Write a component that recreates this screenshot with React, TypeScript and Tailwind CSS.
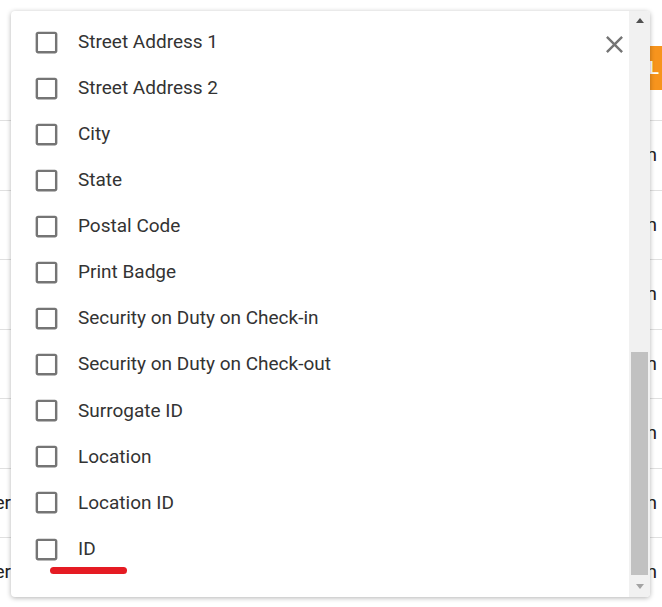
import React from 'react'

const columns = [
  'Street Address 1',
  'Street Address 2',
  'City',
  'State',
  'Postal Code',
  'Print Badge',
  'Security on Duty on Check-in',
  'Security on Duty on Check-out',
  'Surrogate ID',
  'Location',
  'Location ID',
  'ID',
]

const rows = [
  { left: '', right: 'Admin' },
  { left: '', right: 'Admin' },
  { left: '', right: 'Custom' },
  { left: '', right: 'Custom' },
  { left: '', right: 'Admin' },
  { left: 'Manager', right: 'Admin' },
  { left: 'Manager', right: 'Admin' },
]

function CheckboxBlank() {
  return (
    <svg viewBox="0 0 24 24" className="w-[29px] h-[29px] flex-shrink-0" fill="#757575">
      <path d="M19 5v14H5V5h14m0-2H5c-1.11 0-2 .9-2 2v14c0 1.1.89 2 2 2h14c1.1 0 2-.9 2-2V5c0-1.1-.9-2-2-2z" />
    </svg>
  )
}

function CloseIcon() {
  return (
    <svg viewBox="0 0 24 24" className="w-[29px] h-[29px]" fill="#757575">
      <path d="M19 6.41 17.59 5 12 10.59 6.41 5 5 6.41 10.59 12 5 17.59 6.41 19 12 13.41 17.59 19 19 17.59 13.41 12z" />
    </svg>
  )
}

export default function App() {
  return (
    <div
      className="relative w-[662px] h-[607px] overflow-hidden bg-white"
      style={{ fontFamily: 'Roboto, "Noto Sans", sans-serif' }}
    >
      {/* Page behind the dialog */}
      <div className="flex flex-col w-[662px]">
        <div className="h-[121px] border-b border-[#e0e0e0] flex justify-end items-start pt-[46px]">
          <button className="h-[44px] -mr-[17px] px-[20px] bg-[#f7941d] text-white text-[19px] font-medium uppercase rounded-[4px] whitespace-nowrap">
            Cancel
          </button>
        </div>
        {rows.map((row, i) => (
          <div
            key={i}
            className="h-[69.5px] border-b border-[#e0e0e0] flex items-center justify-between text-[19px] text-[#222]"
          >
            <div className="w-[11px] flex justify-end">
              <span className="whitespace-nowrap">{row.left}</span>
            </div>
            <div className="pr-[5px] flex justify-end">
              <span className="whitespace-nowrap">{row.right}</span>
            </div>
          </div>
        ))}
      </div>

      {/* Column picker dialog */}
      <div className="absolute left-[11px] top-[11px] w-[639px] h-[586px] bg-white rounded-[4px] overflow-hidden flex shadow-[0_1px_5px_rgba(0,0,0,0.3)]">
        <div className="relative flex-1 pt-[8px]">
          <ul className="flex flex-col">
            {columns.map((label) => (
              <li key={label} className="h-[46.1px] flex items-center pl-[21px] gap-[17px]">
                <CheckboxBlank />
                <span className="text-[19px] text-[#333] whitespace-nowrap">{label}</span>
              </li>
            ))}
          </ul>
          <button className="absolute right-[0px] top-[19px]" aria-label="Close">
            <CloseIcon />
          </button>
          <div className="absolute left-[39px] top-[556px] w-[77px] h-[7px] rounded-full bg-[#e51b23]" />
        </div>

        {/* Scrollbar */}
        <div className="w-[21px] bg-[#f1f1f1] flex flex-col">
          <div className="h-[19px] flex items-center justify-center">
            <div className="w-0 h-0 border-l-[4.5px] border-r-[4.5px] border-b-[5px] border-l-transparent border-r-transparent border-b-[#505050]" />
          </div>
          <div className="flex-1 flex flex-col justify-end items-center">
            <div className="w-[17px] h-[223px] bg-[#c1c1c1]" />
          </div>
          <div className="h-[22px] flex items-center justify-center">
            <div className="w-0 h-0 border-l-[4.5px] border-r-[4.5px] border-t-[5px] border-l-transparent border-r-transparent border-t-[#a3a3a3]" />
          </div>
        </div>
      </div>
    </div>
  )
}
